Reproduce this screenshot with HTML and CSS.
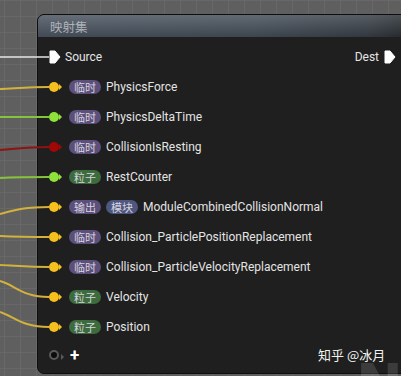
FILE: index.html
```html
<!DOCTYPE html>
<html lang="zh">
<head>
    <meta charset="UTF-8">
    <title>映射集</title>
    <link rel="stylesheet" href="styles.css">
</head>
<body>
    <div class="canvas">
        <div class="node">
            <div class="node-title">映射集</div>
            <div class="node-body">
                <div class="pin-row io-row">
                    <span class="pin-left">
                        <svg class="exec" width="12" height="14" viewBox="0 0 12 14"><path d="M1 1 H6 L11 7 L6 13 H1 Z" fill="#fff" stroke="#fff" stroke-linejoin="round"/></svg>
                        <span class="pin-name">Source</span>
                    </span>
                    <span class="pin-right">
                        <span class="pin-name">Dest</span>
                        <svg class="exec" width="12" height="14" viewBox="0 0 12 14"><path d="M1 1 H6 L11 7 L6 13 H1 Z" fill="#fff" stroke="#fff" stroke-linejoin="round"/></svg>
                    </span>
                </div>

                <div class="pin-row">
                    <span class="dot yellow"></span>
                    <span class="tag temp">临时</span>
                    <span class="pin-name">PhysicsForce</span>
                </div>
                <div class="pin-row">
                    <span class="dot green"></span>
                    <span class="tag temp">临时</span>
                    <span class="pin-name">PhysicsDeltaTime</span>
                </div>
                <div class="pin-row">
                    <span class="dot red"></span>
                    <span class="tag temp">临时</span>
                    <span class="pin-name">CollisionIsResting</span>
                </div>
                <div class="pin-row">
                    <span class="dot green"></span>
                    <span class="tag particle">粒子</span>
                    <span class="pin-name">RestCounter</span>
                </div>
                <div class="pin-row">
                    <span class="dot yellow"></span>
                    <span class="tag temp">输出</span>
                    <span class="tag module">模块</span>
                    <span class="pin-name">ModuleCombinedCollisionNormal</span>
                </div>
                <div class="pin-row">
                    <span class="dot yellow"></span>
                    <span class="tag temp">临时</span>
                    <span class="pin-name">Collision_ParticlePositionReplacement</span>
                </div>
                <div class="pin-row">
                    <span class="dot yellow"></span>
                    <span class="tag temp">临时</span>
                    <span class="pin-name">Collision_ParticleVelocityReplacement</span>
                </div>
                <div class="pin-row">
                    <span class="dot yellow"></span>
                    <span class="tag particle">粒子</span>
                    <span class="pin-name">Velocity</span>
                </div>
                <div class="pin-row">
                    <span class="dot yellow"></span>
                    <span class="tag particle">粒子</span>
                    <span class="pin-name">Position</span>
                </div>

                <div class="pin-row add-row">
                    <span class="dot empty"></span>
                    <span class="plus">+</span>
                </div>
            </div>
        </div>

        <!-- wires coming in from the left -->
        <svg class="wires" width="60" height="376" viewBox="0 0 60 376">
            <path d="M0 57 H49" stroke="#e6e6e6" stroke-width="1.5" fill="none"/>
            <path d="M0 89 C20 88 30 87 49 87" stroke="#d2b23c" stroke-width="2" fill="none"/>
            <path d="M0 117 H49" stroke="#86c23a" stroke-width="2" fill="none"/>
            <path d="M0 150 C20 148 30 147 49 147" stroke="#8c1414" stroke-width="2" fill="none"/>
            <path d="M0 178 C20 177 30 177 49 177" stroke="#86c23a" stroke-width="2" fill="none"/>
            <path d="M0 214 C15 210 25 207 49 207" stroke="#d2b23c" stroke-width="2" fill="none"/>
            <path d="M0 236 C20 237 30 237 49 237" stroke="#d2b23c" stroke-width="2" fill="none"/>
            <path d="M0 265 C20 266 30 267 49 267" stroke="#d2b23c" stroke-width="2" fill="none"/>
            <path d="M0 281 C15 285 22 297 49 297" stroke="#d2b23c" stroke-width="2" fill="none"/>
            <path d="M0 312 C15 317 22 327 49 327" stroke="#d2b23c" stroke-width="2" fill="none"/>
        </svg>

        <div class="stamp">Ni</div>
        <div class="watermark">知乎 @冰月</div>
    </div>
</body>
</html>
```

FILE: styles.css
```css
body {
    margin: 0;
    padding: 0;
    font-family: Roboto, 'Noto Sans CJK SC', sans-serif;
    background-color: #5f5f5f;
}

.canvas {
    position: relative;
    width: 401px;
    height: 376px;
    overflow: hidden;
    padding-top: 14px;
    box-sizing: border-box;
    background-color: #5f5f5f;
    background-image:
        linear-gradient(to right, #686868 1px, transparent 1px),
        linear-gradient(to bottom, #686868 1px, transparent 1px);
    background-size: 16px 16px;
    background-position: 4px 0;
}

.node {
    margin-left: 37px;
    width: 390px;
    height: 360px;
    background-color: #1e1f1e;
    border: 1px solid #0e0e0e;
    border-radius: 7px;
    box-sizing: border-box;
    overflow: hidden;
}

.node-title {
    height: 22px;
    padding-left: 12px;
    display: flex;
    align-items: center;
    font-family: 'Noto Sans CJK SC', sans-serif;
    font-size: 12.5px;
    color: #aeb3b9;
    background:
        linear-gradient(to bottom, rgba(255, 255, 255, 0.14), rgba(0, 0, 0, 0.15)),
        linear-gradient(to right, #4d5763 0%, #47515c 55%, #3a4149 85%, #23272b 100%);
}

.node-body {
    padding-top: 5px;
}

.pin-row {
    height: 30px;
    display: flex;
    align-items: center;
    padding-left: 11px;
    font-size: 12px;
    color: #e4e4e4;
}

.io-row {
    justify-content: space-between;
    padding-right: 30px;
}

.pin-left,
.pin-right {
    display: flex;
    align-items: center;
    gap: 4px;
}

.pin-right {
    gap: 5px;
}

.dot {
    position: relative;
    width: 10px;
    height: 10px;
    border-radius: 50%;
    margin-right: 10px;
}

.dot::after {
    content: '';
    position: absolute;
    left: 10px;
    top: 2px;
    border-left: 3px solid currentColor;
    border-top: 3px solid transparent;
    border-bottom: 3px solid transparent;
}

.dot.yellow {
    background-color: #f6c01d;
    color: #f6c01d;
}

.dot.green {
    background-color: #8ee23a;
    color: #8ee23a;
}

.dot.red {
    background-color: #a00808;
    color: #a00808;
}

.dot.empty {
    box-sizing: border-box;
    border: 2px solid #5a5a5a;
    background-color: #0c0c0c;
    color: #5a5a5a;
}

.tag {
    height: 14px;
    padding: 0 5px;
    border-radius: 7px;
    margin-right: 5px;
    display: flex;
    align-items: center;
    font-family: 'Noto Sans CJK SC', sans-serif;
    font-size: 11px;
    color: #d6d4de;
}

.tag.temp {
    background-color: #5d4f7b;
}

.tag.module {
    background-color: #4f5780;
}

.tag.particle {
    background-color: #3e6b3e;
}

.pin-name {
    white-space: nowrap;
}

.add-row {
    height: 26px;
}

.plus {
    font-size: 17px;
    font-weight: bold;
    color: #fff;
    margin-left: 1px;
}

.wires {
    position: absolute;
    left: 0;
    top: 0;
    pointer-events: none;
}

.stamp {
    position: absolute;
    left: 356px;
    top: 378px;
    font-size: 56px;
    font-weight: bold;
    font-family: 'DejaVu Sans', sans-serif;
    color: rgba(255, 255, 255, 0.13);
    line-height: 12px;
    height: 12px;
}

.watermark {
    position: absolute;
    left: 318px;
    top: 345px;
    font-family: 'Noto Sans CJK SC', sans-serif;
    font-size: 13px;
    color: #f2f2f2;
}
```
